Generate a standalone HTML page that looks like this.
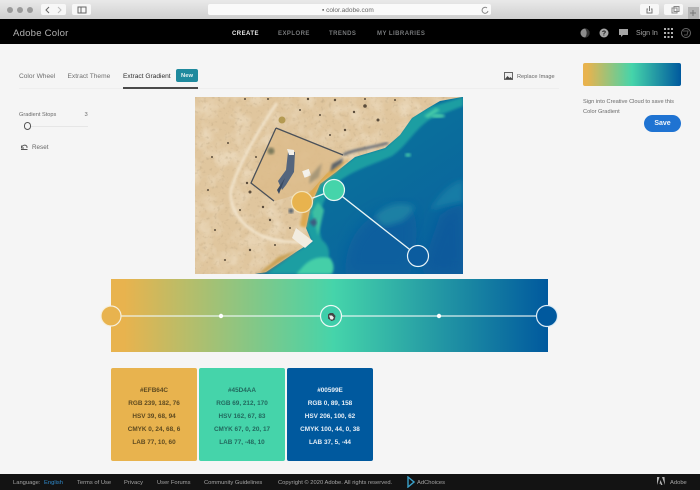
<!DOCTYPE html>
<html>
<head>
<meta charset="utf-8">
<style>
html,body{margin:0;padding:0;width:700px;height:490px;overflow:hidden;background:#f5f5f5;font-family:"Liberation Sans",sans-serif}
#p{position:relative;width:700px;height:490px;overflow:hidden;filter:blur(.3px)}
.a{position:absolute;white-space:nowrap}
.chrome{left:0;top:0;width:700px;height:19px;background:linear-gradient(#e9e9e9,#cfcfcf)}
.btn{background:#f7f7f7;border-radius:2px;height:11px;top:4px}
.hdr{left:0;top:19px;width:700px;height:25px;background:#000}
.nav{top:29.500px;font-size:6px;font-weight:bold;letter-spacing:.45px;color:#77797b;line-height:9px}
.tab{top:71.500px;font-size:6.6px;color:#6f6f6f;line-height:10px}
.card{top:368px;width:86px;height:93px;border-radius:2px;text-align:center;font-size:6.4px;font-weight:bold;line-height:13.2px;padding-top:15.5px;box-sizing:border-box}
.ft{top:478.500px;font-size:5.8px;color:#a5a5a5;line-height:8px}
</style>
</head>
<body>
<div id="p">
<div class="a chrome"></div>
<div class="a" style="left:7px;top:7px;width:6px;height:6px;border-radius:50%;background:#9a9a9a"></div>
<div class="a" style="left:17px;top:7px;width:6px;height:6px;border-radius:50%;background:#9a9a9a"></div>
<div class="a" style="left:27px;top:7px;width:6px;height:6px;border-radius:50%;background:#9a9a9a"></div>
<div class="a btn" style="left:41px;width:25px"></div>
<div class="a btn" style="left:72px;width:19px"></div>
<div class="a" style="left:208px;top:4px;width:283px;height:11px;background:#fafafa;border-radius:2px"></div>
<div class="a" style="left:322px;top:5.500px;font-size:6.5px;line-height:9px;color:#666">▪ color.adobe.com</div>
<div class="a btn" style="left:640px;width:19px"></div>
<div class="a btn" style="left:664px;width:19px"></div>
<div class="a" style="left:688px;top:7px;width:11px;height:12px;background:#b5b5b5"></div>
<svg class="a" style="left:0;top:0" width="700" height="19" fill="none" stroke="#666" stroke-width="1">
<path d="M49 7l-3 3 3 3"/><path d="M58 7l3 3-3 3" stroke="#bbb"/>
<rect x="78" y="7" width="8" height="6"/><path d="M81 7v6"/>
<path d="M487 8a3 3 0 1 0 1 3" stroke="#888"/>
<path d="M648 9h-1v4h5v-4h-1M649.500 11V6" stroke="#777"/>
<rect x="672" y="8" width="5" height="5" stroke="#888"/><rect x="674" y="6.500" width="5" height="5" stroke="#888"/>
<path d="M693 10v6M690 13h6" stroke="#777"/>
</svg>

<div class="a hdr"></div>
<div class="a" style="left:13px;top:26.500px;font-size:9.6px;line-height:14px;color:#b0b0b0;letter-spacing:.2px">Adobe Color</div>
<div class="a nav" style="left:232px;color:#e8e8e8">CREATE</div>
<div class="a nav" style="left:278px">EXPLORE</div>
<div class="a nav" style="left:329px">TRENDS</div>
<div class="a nav" style="left:377px">MY LIBRARIES</div>
<svg class="a" style="left:575px;top:24.500px" width="125" height="16">
<circle cx="10" cy="8" r="4.500" fill="#8d8d8d"/><path d="M10 3.500a4.500 4.500 0 0 1 0 9a7 7 0 0 0 0-9z" fill="#333"/>
<circle cx="29" cy="8" r="4.500" fill="#a5a5a5"/><text x="29" y="10.500" font-size="7" font-weight="bold" text-anchor="middle" fill="#111" font-family="Liberation Sans">?</text>
<path d="M44 4h9v6h-5l-2 2v-2h-2z" fill="#a5a5a5"/>
<g fill="#b0b0b0"><rect x="89" y="3" width="2" height="2"/><rect x="92.500" y="3" width="2" height="2"/><rect x="96" y="3" width="2" height="2"/><rect x="89" y="7" width="2" height="2"/><rect x="92.500" y="7" width="2" height="2"/><rect x="96" y="7" width="2" height="2"/><rect x="89" y="11" width="2" height="2"/><rect x="92.500" y="11" width="2" height="2"/><rect x="96" y="11" width="2" height="2"/></g>
<circle cx="111" cy="8" r="4.500" fill="none" stroke="#666"/><path d="M108 6h5l-1 4h-3" fill="none" stroke="#555"/>
</svg>
<div class="a" style="left:636px;top:28.500px;font-size:7px;line-height:9px;color:#a5a5a5">Sign In</div>

<div class="a" style="left:19px;top:88px;width:540px;height:1px;background:#eeeeee"></div>
<div class="a tab" style="left:19px">Color Wheel</div>
<div class="a tab" style="left:67.500px">Extract Theme</div>
<div class="a tab" style="left:123px;color:#2e2e2e">Extract Gradient</div>
<div class="a" style="left:123px;top:87px;width:75px;height:2px;background:#4a4a4a"></div>
<div class="a" style="left:176px;top:69px;width:22px;height:13px;background:#1f8a9e;border-radius:2px;color:#e8f4f4;font-size:5.8px;font-weight:bold;line-height:14px;text-align:center">New</div>

<svg class="a" style="left:504px;top:72px" width="10" height="9"><rect x=".5" y=".5" width="8" height="7" fill="#eee" stroke="#666"/><path d="M1 7l2.500-3 2 2 1-1 2 2z" fill="#444"/></svg>
<div class="a" style="left:517px;top:72.500px;font-size:5.6px;line-height:9px;color:#666">Replace Image</div>

<div class="a" style="left:583px;top:63px;width:98px;height:23px;border-radius:2px;background:linear-gradient(90deg,#e8b34e 0%,#e8b34e 4%,#45d4aa 50%,#00599e 100%)"></div>
<div class="a" style="left:583px;top:98px;font-size:5.65px;line-height:9.500px;color:#6a6a6a">Sign into Creative Cloud to save this<br>Color Gradient</div>
<div class="a" style="left:644px;top:115px;width:37px;height:17px;border-radius:9px;background:#1f73d2;color:#f2f6fb;font-size:7px;font-weight:bold;line-height:18px;text-align:center">Save</div>

<div class="a" style="left:19px;top:110.500px;font-size:5.6px;line-height:8px;color:#6a6a6a">Gradient Stops</div>
<div class="a" style="left:84.500px;top:110.500px;font-size:5.8px;line-height:8px;color:#6a6a6a">3</div>
<div class="a" style="left:27px;top:125.500px;width:61px;height:1px;background:#e6e6e6"></div>
<div class="a" style="left:23.500px;top:122px;width:5.500px;height:5.500px;border:1.200px solid #555;border-radius:50%;background:#f5f5f5"></div>
<svg class="a" style="left:19px;top:142px" width="10" height="9" fill="none" stroke="#555" stroke-width=".9"><path d="M2 7.500h6.500M2.500 6a3 3 0 0 1 5.500-1.500l0 1.500M2.500 3.500l0 2.500 2.500 0"/></svg>
<div class="a" style="left:32px;top:142.500px;font-size:6.3px;line-height:9px;color:#666">Reset</div>

<svg class="a" style="left:0;top:0" width="700" height="490">
<defs>
<linearGradient id="w" x1="0" y1="0" x2="1" y2="1"><stop offset="0" stop-color="#0e8099"/><stop offset=".5" stop-color="#0a6f9c"/><stop offset="1" stop-color="#09609e"/></linearGradient>
<filter id="b1"><feGaussianBlur stdDeviation="1.200"/></filter>
<filter id="b3"><feGaussianBlur stdDeviation="3"/></filter>
<filter id="b6"><feGaussianBlur stdDeviation="7"/></filter>
<filter id="sp" x="0" y="0" width="100%" height="100%"><feTurbulence type="fractalNoise" baseFrequency=".28" numOctaves="2" seed="5"/><feColorMatrix type="matrix" values="0 0 0 0 .45  0 0 0 0 .34  0 0 0 0 .2  1.500 1.500 0 0 -1.650"/></filter>
<filter id="sp2" x="0" y="0" width="100%" height="100%"><feTurbulence type="fractalNoise" baseFrequency=".06" numOctaves="3" seed="9"/><feColorMatrix type="matrix" values="0 0 0 0 .96  0 0 0 0 .9  0 0 0 0 .78  2 0 0 0 -.8"/></filter>
<clipPath id="c"><rect x="195" y="97" width="268" height="177"/></clipPath>
<clipPath id="sand"><path d="M195 97 H462 L440 101 L428 108 L412 118 L400 135 L385 148 L355 157 L336 172 L320 184 L311 205 L306 228 L312 242 L296 252 L266 272 L255 274 H195z"/></clipPath>
</defs>
<g clip-path="url(#c)">
<rect x="195" y="97" width="268" height="177" fill="url(#w)"/>
<!-- deep / shallow water patches -->
<path d="M345 274 C345 240 360 215 400 205 C420 200 420 240 410 274z" fill="#0a5f9e" filter="url(#b6)"/>
<path d="M420 274 L463 274 V200 L440 215z" fill="#0a5a9c" filter="url(#b6)"/>
<path d="M375 215 q20 -18 40 -8 q-10 16 -20 16 q-15 8 -20 -8z" fill="#1a80a4" filter="url(#b3)"/>
<path d="M430 210 q15 -25 33 -30 v22 q-18 3 -33 8z" fill="#187ca6" filter="url(#b3)"/>
<!-- shallows along coast -->
<path d="M463 97 L430 107 L412 117 L399 135 L385 148 L355 157 L336 172 L320 184 L311 205 L306 228 L312 242 L296 252 L266 274 L330 274 C325 262 335 250 322 240 C316 225 320 205 330 190 C345 172 370 166 392 156 C408 145 415 128 432 118 L463 106z" fill="#1f9ea2" filter="url(#b1)"/>
<path d="M300 270 q12 -16 30 -12 q6 8 2 16 h-36z" fill="#45cfa8" filter="url(#b1)"/>
<path d="M424 116 l12 -8 l4 2 l-12 8z" fill="#45c9a8" filter="url(#b1)"/>
<ellipse cx="438" cy="116" rx="7" ry="2" fill="#46c9a8" filter="url(#b1)"/>
<ellipse cx="408" cy="155" rx="3" ry="2" fill="#3cc0a8" filter="url(#b1)"/>
<path d="M312 212 l6 -10 l6 8 l-6 26z" fill="#3dbfa2" filter="url(#b1)"/>
<path d="M309 222 l6 -4 l2 5 l-3 4z" fill="#3d5a80" filter="url(#b1)"/>
<!-- sand -->
<path d="M195 97 H462 L440 101 L428 108 L412 118 L400 135 L385 148 L355 157 L336 172 L320 184 L311 205 L306 228 L312 242 L296 252 L266 272 L255 274 H195z" fill="#e0c69e"/>
<g clip-path="url(#sand)">
<rect x="195" y="97" width="268" height="177" filter="url(#sp2)" opacity=".45"/>
<rect x="195" y="97" width="268" height="177" filter="url(#sp)" opacity=".55"/>
</g>
<path d="M350 158 L336 172 L320 184 L311 205 L306 228 L300 226 L304 200 L318 178 L338 165z" fill="#dda94f" filter="url(#b1)"/>
<path d="M298 250 L266 272 L258 274 L278 257z" fill="#c9a157" filter="url(#b1)"/>
<!-- compound interior -->
<path d="M276 128 L343 155 L312 190 L275 201 L251 183z" fill="#dcbb8a" opacity=".85"/>
<!-- pale road -->
<path d="M277 103 C262 125 240 160 231 190 C229 208 240 225 262 236 C280 243 296 242 305 242" fill="none" stroke="#f3e6cf" stroke-width="2.600" filter="url(#b1)"/>
<path d="M296 228 L313 241 L305 248 L292 238z" fill="#f2ece0"/>
<!-- walls -->
<path d="M276 128 L343 155 M276 128 L251 183 L274 201" fill="none" stroke="#4a5058" stroke-width="1.300"/>
<path d="M343 155 C352 150 370 148 388 143" fill="none" stroke="#44536a" stroke-width="2" filter="url(#b1)"/>
<path d="M332 164 L343 158 L342 163 L330 172z" fill="#5a6068" filter="url(#b1)"/>
<!-- buildings and shadows -->
<path d="M288 152 L295 152 L294 172 L286 185 L282 190 L278 181 L286 170z" fill="#54657d"/>
<path d="M287 149 L294 150 L294 155 L289 155z" fill="#f2efe8"/>
<path d="M277 190 L285 178 L279 194z" fill="#3a4a60"/>
<rect x="303" y="170" width="7" height="7" fill="#f4f2ec" transform="rotate(-20 306 173)"/>
<path d="M310 176 L322 163 L319 177 L309 184z" fill="#a89878" filter="url(#b1)"/>
<circle cx="271" cy="151" r="3.500" fill="#7d7a5c" filter="url(#b1)"/>
<circle cx="282" cy="120" r="3.500" fill="#b49a52"/>
<circle cx="291" cy="211" r="2.500" fill="#4f5f6f" filter="url(#b1)"/>
<!-- speckles -->
<g fill="#5b4d3c">
<circle cx="245" cy="99" r="1"/><circle cx="268" cy="99" r="1"/><circle cx="308" cy="99" r="1.200"/><circle cx="335" cy="100" r="1.200"/><circle cx="365" cy="99" r="1"/><circle cx="365" cy="106" r="1.800"/><circle cx="354" cy="112" r="1.200"/><circle cx="378" cy="120" r="1.500"/><circle cx="320" cy="115" r="1"/><circle cx="212" cy="157" r="1"/><circle cx="228" cy="143" r="1"/><circle cx="256" cy="157" r="1"/><circle cx="247" cy="183" r="1.200"/><circle cx="250" cy="192" r="1.500"/><circle cx="263" cy="207" r="1.200"/><circle cx="240" cy="210" r="1"/><circle cx="215" cy="230" r="1"/><circle cx="250" cy="250" r="1.200"/><circle cx="290" cy="228" r="1"/><circle cx="270" cy="220" r="1.200"/><circle cx="208" cy="190" r="1"/><circle cx="330" cy="135" r="1"/><circle cx="345" cy="130" r="1.200"/><circle cx="300" cy="110" r="1"/><circle cx="395" cy="100" r="1"/><circle cx="225" cy="260" r="1"/><circle cx="275" cy="245" r="1"/>
</g>
</g>
<!-- image handles -->
<path d="M302 202 L334 190 L418 256" fill="none" stroke="#eaf6f6" stroke-width="1.300"/>
<circle cx="302" cy="202" r="10.500" fill="#e8b34e" stroke="#f2e3bb" stroke-width="1.200"/>
<circle cx="334" cy="190" r="10.500" fill="#45d4aa" stroke="#e8f8f4" stroke-width="1.200"/>
<circle cx="418" cy="256" r="10.500" fill="#0b5c9f" stroke="#e8f4f8" stroke-width="1.200"/>
</svg>

<div class="a" style="left:111px;top:279px;width:437px;height:73px;background:linear-gradient(90deg,#e8b34e 0%,#e8b34e 3%,#45d4aa 51%,#00599e 100%)"></div>
<svg class="a" style="left:95px;top:295px" width="470" height="42">
<path d="M16 21H452" stroke="#eef8f6" stroke-width="1.300" opacity=".9"/>
<circle cx="16" cy="21" r="10" fill="#e8b34e" stroke="#f6efdc" stroke-width="1.200"/>
<circle cx="126" cy="21" r="2.200" fill="#fff"/>
<circle cx="236" cy="21" r="10.500" fill="#3fceaa" stroke="#eefaf6" stroke-width="1.200"/>
<circle cx="344" cy="21" r="2.200" fill="#fff"/>
<circle cx="452" cy="21" r="10.500" fill="#00599e" stroke="#dcebf5" stroke-width="1.200"/>
<path d="M233 19.500l2-1.500 3 0 2.500 3-1 4-3 1-3.500-2.500z" fill="#444"/><path d="M234 20.500l3 0 1.800 2-1 2-2.300 0z" fill="#eee"/>
</svg>

<div class="a card" style="left:111px;background:#e8b34e;color:#5e4a20">#EFB64C<br>RGB 239, 182, 76<br>HSV 39, 68, 94<br>CMYK 0, 24, 68, 6<br>LAB 77, 10, 60</div>
<div class="a card" style="left:199px;background:#45d4aa;color:#22695e">#45D4AA<br>RGB 69, 212, 170<br>HSV 162, 67, 83<br>CMYK 67, 0, 20, 17<br>LAB 77, -48, 10</div>
<div class="a card" style="left:287px;background:#00599e;color:#e6eff7">#00599E<br>RGB 0, 89, 158<br>HSV 206, 100, 62<br>CMYK 100, 44, 0, 38<br>LAB 37, 5, -44</div>

<div class="a" style="left:0;top:474px;width:700px;height:16px;background:#131313"></div>
<div class="a ft" style="left:13px">Language:</div>
<div class="a ft" style="left:44px;color:#2f88c8">English</div>
<div class="a ft" style="left:77px">Terms of Use</div>
<div class="a ft" style="left:124px">Privacy</div>
<div class="a ft" style="left:157px">User Forums</div>
<div class="a ft" style="left:204px">Community Guidelines</div>
<div class="a ft" style="left:278px">Copyright © 2020 Adobe. All rights reserved.</div>
<svg class="a" style="left:406px;top:476px" width="9" height="12"><path d="M2 1L8 6 2 11z" fill="none" stroke="#3aa0c8" stroke-width="1.400"/></svg>
<div class="a ft" style="left:417px">AdChoices</div>
<svg class="a" style="left:656px;top:477px" width="10" height="9" fill="#b5b5b5"><path d="M1 0h2.500L1 8zM6 0h2.500L9 8zM4.500 3l2 5H5L4.500 6.500 3.500 7z"/></svg>
<div class="a ft" style="left:670px">Adobe</div>
</div>
</body>
</html>
